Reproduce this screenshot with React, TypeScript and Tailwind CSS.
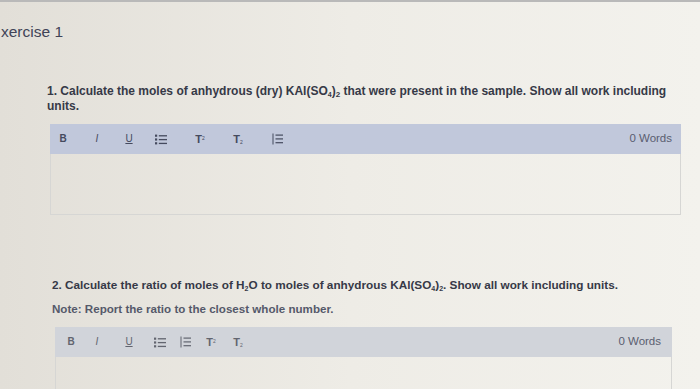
import React from 'react';

type IconKind = 'b' | 'i' | 'u' | 'ul' | 'ol' | 'sup' | 'sub';

const Icon: React.FC<{ kind: IconKind }> = ({ kind }) => {
  if (kind === 'b') return <span className="text-[10px] font-bold leading-none">B</span>;
  if (kind === 'i') return <span className="text-[10px] italic leading-none">I</span>;
  if (kind === 'u') return <span className="text-[10px] underline leading-none">U</span>;
  if (kind === 'sup')
    return (
      <span className="text-[11px] font-bold leading-none">
        T<sup className="text-[5px] font-normal">2</sup>
      </span>
    );
  if (kind === 'sub')
    return (
      <span className="text-[11px] font-bold leading-none">
        T<sub className="text-[5px] font-normal">2</sub>
      </span>
    );
  if (kind === 'ul')
    return (
      <svg width="12" height="11" viewBox="0 0 11 10" fill="currentColor">
        <rect x="0" y="0.5" width="2" height="2" />
        <rect x="0" y="4" width="2" height="2" />
        <rect x="0" y="7.5" width="2" height="2" />
        <rect x="3.5" y="1" width="7.5" height="1.2" />
        <rect x="3.5" y="4.5" width="7.5" height="1.2" />
        <rect x="3.5" y="8" width="7.5" height="1.2" />
      </svg>
    );
  return (
    <svg width="11" height="12" viewBox="0 0 11 11" fill="currentColor">
      <rect x="0.5" y="0" width="1" height="11" />
      <rect x="3.5" y="1" width="7.5" height="1.2" />
      <rect x="3.5" y="4.8" width="7.5" height="1.2" />
      <rect x="3.5" y="8.6" width="7.5" height="1.2" />
    </svg>
  );
};

const Toolbar: React.FC<{ items: { kind: IconKind; w: string }[]; bar: string; text: string; pr: string }> = ({
  items,
  bar,
  text,
  pr,
}) => (
  <div className={`flex h-[30px] items-center ${bar} ${text} ${pr}`}>
    {items.map((it, i) => (
      <div key={i} className={`flex shrink-0 justify-center ${it.w}`}>
        <Icon kind={it.kind} />
      </div>
    ))}
    <span className="ml-auto text-[11.5px] text-[#5a5e70]">0&nbsp;Words</span>
  </div>
);

export default function App() {
  const bar1: { kind: IconKind; w: string }[] = [
    { kind: 'b', w: 'w-[26px]' },
    { kind: 'i', w: 'w-[42px]' },
    { kind: 'u', w: 'w-[22px]' },
    { kind: 'ul', w: 'w-[42px]' },
    { kind: 'sup', w: 'w-[36px]' },
    { kind: 'sub', w: 'w-[40px]' },
    { kind: 'ol', w: 'w-[38px]' },
  ];
  const bar2: { kind: IconKind; w: string }[] = [
    { kind: 'b', w: 'w-[32px]' },
    { kind: 'i', w: 'w-[20px]' },
    { kind: 'u', w: 'w-[44px]' },
    { kind: 'ul', w: 'w-[18px]' },
    { kind: 'ol', w: 'w-[32px]' },
    { kind: 'sup', w: 'w-[20px]' },
    { kind: 'sub', w: 'w-[34px]' },
  ];

  return (
    <div
      className="h-[389px] w-[700px] overflow-hidden bg-gradient-to-r from-[#e2dfd8] via-[#eeece6] to-[#f3f2ed] text-[#363947]"
      style={{ fontFamily: '"Liberation Sans", Arial, sans-serif' }}
    >
      <div className="h-[2px] bg-[#b9b9b9]" />
      <div className="pt-[20px] pl-[1px] text-[15.5px] leading-[20px] text-[#404357]">xercise 1</div>

      <div className="pt-[42px] pl-[47px] text-[12px] font-bold leading-[15px]">
        <div className="whitespace-nowrap">
          1. Calculate the moles of anhydrous (dry) KAl(SO<sub className="text-[7px]">4</sub>)
          <sub className="text-[8px]">2</sub> that were present in the sample. Show all work including
        </div>
        <div>units.</div>
      </div>

      <div className="ml-[50px] mr-[19px] mt-[10px]">
        <Toolbar items={bar1} bar="bg-[#c1c8db]" text="text-[#454a5e]" pr="pr-[9px]" />
        <div className="h-[61px] border-x border-b border-[#d6d6d4]" />
      </div>

      <div className="pt-[62px] pl-[52px] text-[11.75px] font-bold leading-[16px]">
        2. Calculate the ratio of moles of H<sub className="text-[7px]">2</sub>O to moles of anhydrous KAl(SO
        <sub className="text-[7px]">4</sub>)<sub className="text-[7px]">2</sub>. Show all work including units.
      </div>
      <div className="pt-[8px] pl-[52px] text-[11.6px] font-bold leading-[16px] text-[#55596a]">
        Note: Report the ratio to the closest whole number.
      </div>

      <div className="ml-[55px] mr-[28px] mt-[10px]">
        <Toolbar items={bar2} bar="bg-[#d1d4da]" text="text-[#62656f]" pr="pr-[11px]" />
        <div className="h-[40px] border-x border-[#d6d6d4]" />
      </div>
    </div>
  );
}
